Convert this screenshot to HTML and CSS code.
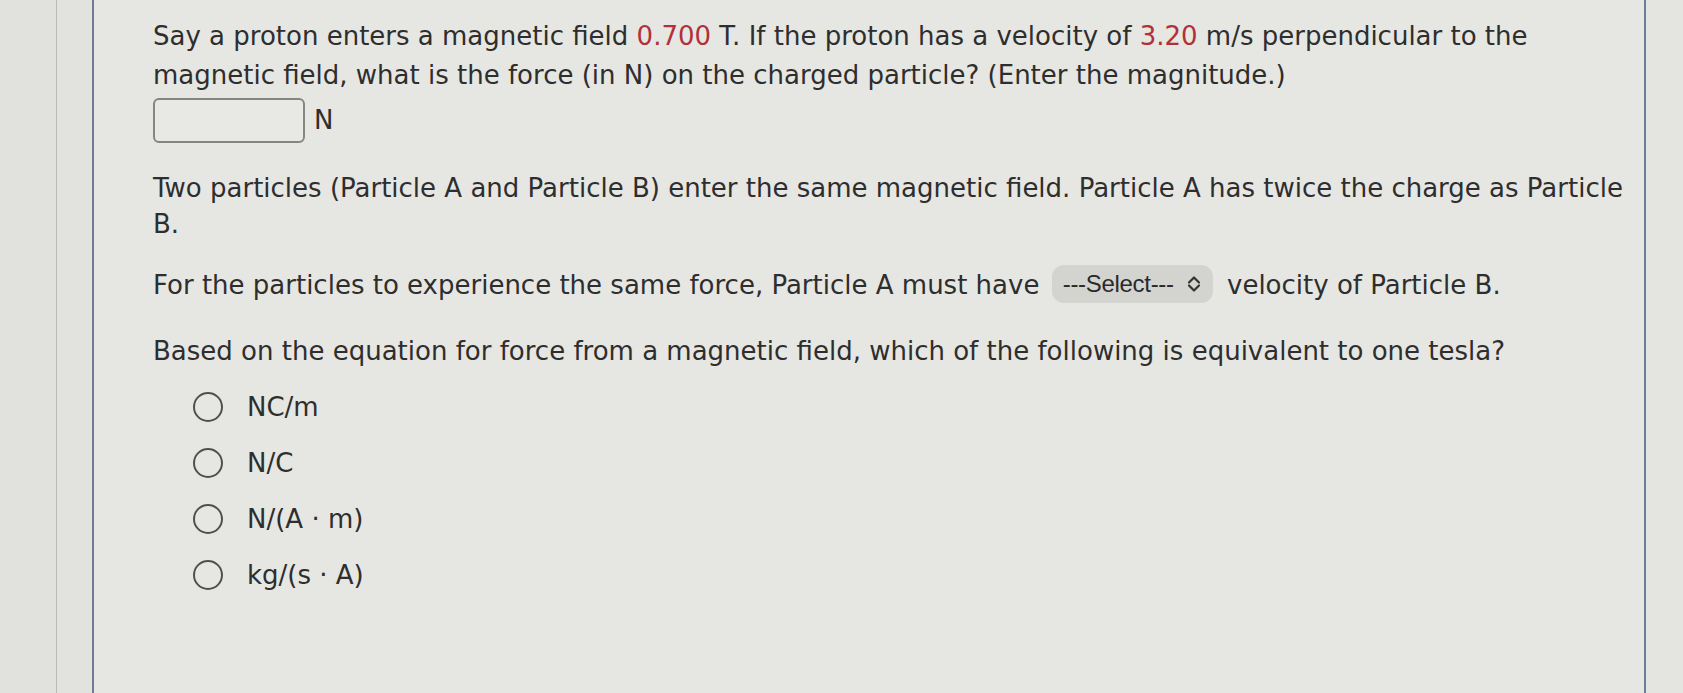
FILE: index.html
```html
<!DOCTYPE html>
<html>
<head>
<meta charset="utf-8">
<link rel="stylesheet" href="styles.css">
</head>
<body>
<div class="page">
  <div class="gutter"></div>
  <div class="margin"></div>
  <main class="content">
    <p class="q q1">Say a proton enters a magnetic field <span class="num">0.700</span> T. If the proton has a velocity of <span class="num">3.20</span> m/s perpendicular to the magnetic field, what is the force (in N) on the charged particle? (Enter the magnitude.)</p>
    <div class="answer">
      <input class="field" type="text">
      <span class="unit">N</span>
    </div>
    <p class="q q2">Two particles (Particle A and Particle B) enter the same magnetic field. Particle A has twice the charge as Particle B.</p>
    <p class="q q3">For the particles to experience the same force, Particle A must have <span class="select">---Select---<svg class="chev" viewBox="0 0 16 18" width="16" height="18"><path d="M3 7.5 L8 2.5 L13 7.5 M3 10.5 L8 15.5 L13 10.5" fill="none" stroke="#333" stroke-width="2.2" stroke-linecap="round" stroke-linejoin="round"/></svg></span> velocity of Particle B.</p>
    <p class="q q4">Based on the equation for force from a magnetic field, which of the following is equivalent to one tesla?</p>
    <ul class="options">
      <li class="opt"><span class="radio"></span><span>NC/m</span></li>
      <li class="opt"><span class="radio"></span><span>N/C</span></li>
      <li class="opt"><span class="radio"></span><span>N/(A · m)</span></li>
      <li class="opt"><span class="radio"></span><span>kg/(s · A)</span></li>
    </ul>
  </main>
  <div class="edge"></div>
</div>
</body>
</html>
```
FILE: styles.css
```css
html, body {
  margin: 0;
  padding: 0;
  height: 100%;
}
body {
  background: #e3e3e0;
  font-family: "DejaVu Sans", Verdana, sans-serif;
  color: #2e2e2e;
  overflow: hidden;
}
.page {
  display: flex;
  height: 693px;
}
.gutter {
  width: 56px;
  flex: none;
  background: #e1e1de;
  border-right: 1px solid #b9b9b6;
}
.margin {
  width: 35px;
  flex: none;
  background: #e2e2df;
  border-right: 2px solid #6e7c99;
}
.content {
  flex: none;
  width: 1550px;
  padding: 17px 0 0 59px;
  box-sizing: border-box;
  background: #e6e6e3;
}
.edge {
  flex: 1;
  border-left: 2px solid #6d7d9c;
  background: #e4e4e1;
}
.q {
  margin: 0;
  font-size: 26px;
  line-height: 39px;
}
.num {
  color: #b0313a;
}
.answer {
  display: flex;
  align-items: center;
  gap: 9px;
  margin-top: 0;
  height: 50px;
}
.field {
  width: 152px;
  height: 45px;
  box-sizing: border-box;
  border: 2px solid #858583;
  border-radius: 6px;
  background: #e8e8e5;
  margin: 0;
}
.unit {
  font-size: 26px;
}
.q2 {
  margin-top: 25px;
  line-height: 36px;
}
.q3 {
  margin-top: 24px;
}
.select {
  display: inline-flex;
  align-items: center;
  gap: 12px;
  height: 38px;
  vertical-align: middle;
  padding: 0 11px 0 11px;
  margin: 0 6px 0 4px;
  background: #d3d3d0;
  border-radius: 12px;
  font-family: "Liberation Sans", Arial, sans-serif;
  font-size: 24px;
  letter-spacing: -0.3px;
  color: #2a2a2a;
  position: relative;
  top: -3px;
}
.chev {
  display: block;
}
.q4 {
  margin-top: 26px;
}
.options {
  list-style: none;
  margin: 17px 0 0 0;
  padding: 0 0 0 40px;
  display: flex;
  flex-direction: column;
  gap: 17px;
}
.opt {
  display: flex;
  align-items: center;
  gap: 24px;
  height: 39px;
  font-size: 26px;
}
.radio {
  width: 30px;
  height: 30px;
  box-sizing: border-box;
  border: 2.5px solid #505050;
  border-radius: 50%;
  flex: none;
}
```
